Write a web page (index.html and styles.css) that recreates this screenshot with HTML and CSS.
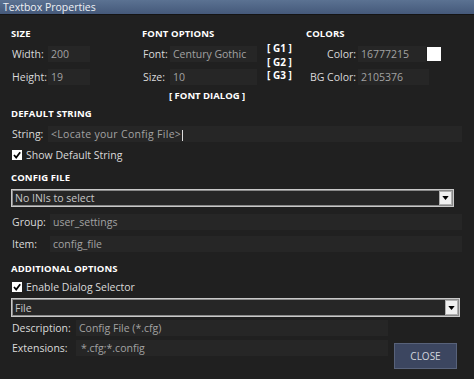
FILE: index.html
```html
<!DOCTYPE html>
<html>
<head>
<meta charset="utf-8">
<link rel="stylesheet" href="styles.css">
</head>
<body>
<div class="window">
  <div class="titlebar">Textbox Properties</div>
  <div class="content">
    <div class="top">
      <div class="col col-size">
        <div class="hdr">SIZE</div>
        <div class="row r1"><span class="lbl w36">Width:</span><span class="inp w42">200</span></div>
        <div class="row r2"><span class="lbl w36">Height:</span><span class="inp w42">19</span></div>
      </div>
      <div class="col col-font">
        <div class="hdr">FONT OPTIONS</div>
        <div class="font-body">
          <div class="font-fields">
            <div class="row r1"><span class="lbl w28">Font:</span><span class="inp w87">Century Gothic</span></div>
            <div class="row r2"><span class="lbl w28">Size:</span><span class="inp w87">10</span></div>
          </div>
          <div class="gstack">
            <span class="btnlink">[ G1 ]</span>
            <span class="btnlink">[ G2 ]</span>
            <span class="btnlink">[ G3 ]</span>
          </div>
        </div>
        <div class="btnlink dialog">[ FONT DIALOG ]</div>
      </div>
      <div class="col col-colors">
        <div class="hdr">COLORS</div>
        <div class="row r1"><span class="lbl w50 right">Color:</span><span class="inp w68">16777215</span><span class="swatch"></span></div>
        <div class="row r2"><span class="lbl w50 right">BG Color:</span><span class="inp w71">2105376</span></div>
      </div>
    </div>

    <div class="hdr sec-default">DEFAULT STRING</div>
    <div class="row r-string"><span class="lbl w36">String:</span><span class="inp wide">&lt;Locate your Config File&gt;<span class="caret"></span></span></div>
    <div class="check r-check1"><span class="box"><svg viewBox="0 0 10 10" width="10" height="10"><path d="M2 5 L4.2 7.5 L8.2 2.3" fill="none" stroke="#000" stroke-width="1.8"/></svg></span><span class="lbl">Show Default String</span></div>

    <div class="hdr sec-config">CONFIG FILE</div>
    <div class="select sel1"><span class="sel-text">No INIs to select</span><span class="arrow"><svg viewBox="0 0 8 5" width="7" height="4"><path d="M0 0 H8 L4 5 Z" fill="#000"/></svg></span></div>
    <div class="row r-group"><span class="lbl w38">Group:</span><span class="inp wide2">user_settings</span></div>
    <div class="row r-item"><span class="lbl w38">Item:</span><span class="inp wide2">config_file</span></div>

    <div class="hdr sec-add">ADDITIONAL OPTIONS</div>
    <div class="check r-check2"><span class="box"><svg viewBox="0 0 10 10" width="10" height="10"><path d="M2 5 L4.2 7.5 L8.2 2.3" fill="none" stroke="#000" stroke-width="1.8"/></svg></span><span class="lbl">Enable Dialog Selector</span></div>
    <div class="select sel2"><span class="sel-text">File</span><span class="arrow"><svg viewBox="0 0 8 5" width="7" height="4"><path d="M0 0 H8 L4 5 Z" fill="#000"/></svg></span></div>

    <div class="bottom">
      <div class="bfields">
        <div class="row r-desc"><span class="lbl w64">Description:</span><span class="inp w312">Config File (*.cfg)</span></div>
        <div class="row r-ext"><span class="lbl w64">Extensions:</span><span class="inp w312 pad4">*.cfg;*.config</span></div>
      </div>
      <div class="close">CLOSE</div>
    </div>
  </div>
</div>
</body>
</html>
```
FILE: styles.css
```css
* { box-sizing: border-box; }
html, body { margin: 0; padding: 0; }
body {
  width: 474px;
  height: 379px;
  overflow: hidden;
  background: #1f1f1f;
  font-family: "Open Sans", "DejaVu Sans", sans-serif;
  font-size: 10.5px;
  color: #d6d6d6;
}
.window { width: 474px; height: 379px; background: #202020; }
.titlebar {
  height: 15px;
  line-height: 14px;
  padding-left: 3px;
  font-size: 10.5px;
  color: #eef0f4;
  background: linear-gradient(#5b7292, #45597a);
  border-bottom: 1px solid #141414;
}
.content { padding-left: 11px; }
.top {
  display: grid;
  grid-template-columns: 131px 164px 1fr;
  padding-top: 12px;
}
.hdr {
  height: 14px;
  line-height: 14px;
  font-weight: 700;
  font-size: 9.5px;
  color: #ffffff;
  letter-spacing: 0.1px;
}
.row { display: flex; align-items: center; height: 16px; }
.r1 { margin-top: 5px; }
.r2 { margin-top: 7px; }
.lbl { padding-left: 1px; white-space: nowrap; color: #dadada; }
.right { text-align: right; padding-right: 2px; }
.w28 { width: 28px; }
.w36 { width: 37px; }
.w38 { width: 39px; }
.w50 { width: 52px; }
.w64 { width: 65px; }
.inp {
  height: 16px;
  line-height: 16px;
  background: #262626;
  color: #a2a2a2;
  padding-left: 3px;
  white-space: nowrap;
  overflow: hidden;
}
.r-string .inp { letter-spacing: 0.3px; }
.pad4 { padding-left: 5px; }
.w42 { width: 42px; }
.w87 { width: 87px; }
.w68 { width: 68px; }
.w71 { width: 71px; }
.wide { width: 414px; }
.wide2 { width: 412px; }
.w312 { width: 312px; }
.swatch {
  width: 14px;
  height: 14px;
  background: #ffffff;
  margin-left: 1px;
}
.font-body { display: flex; }
.gstack {
  display: flex;
  flex-direction: column;
  margin-left: 10px;
  margin-top: 1px;
}
.btnlink {
  font-weight: 700;
  font-size: 10px;
  color: #ffffff;
  line-height: 13.5px;
  white-space: nowrap;
}
.dialog { margin-left: 27px; margin-top: 4px; line-height: 14px; font-size: 9.5px; }
.sec-default { margin-top: 4px; }
.r-string { margin-top: 5px; }
.caret {
  display: inline-block;
  width: 1px;
  height: 11px;
  background: #dddddd;
  vertical-align: middle;
  margin-left: 1px;
}
.check { display: flex; align-items: center; height: 14px; }
.r-check1 { margin-top: 6px; }
.r-check2 { margin-top: 4px; }
.box {
  width: 10px;
  height: 10px;
  background: #ffffff;
  margin-left: 1px;
  margin-right: 3px;
  display: flex;
}
.sec-config { margin-top: 9px; }
.select {
  display: flex;
  align-items: center;
  border: 1px solid #c9c9c9;
  box-shadow: inset 0 0 0 1px #8a8a8a;
  background: #262626;
  color: #c8c8c8;
}
.sel1 { width: 443px; height: 18px; margin-top: 4px; }
.sel2 { width: 449px; height: 19px; margin-top: 4px; }
.sel-text { flex: 1; padding-left: 3px; line-height: 16px; }
.arrow {
  width: 13px;
  height: calc(100% - 2px);
  margin-right: 1px;
  background: #f0f0f0;
  border: 1px solid #b0b0b0;
  display: flex;
  align-items: center;
  justify-content: center;
}
.r-group { margin-top: 7px; }
.r-item { margin-top: 6px; }
.sec-add { margin-top: 10px; }
.bottom { display: flex; align-items: flex-start; margin-top: 3px; }
.r-ext { margin-top: 4px; }
.close {
  margin-left: 6px;
  margin-top: 23px;
  width: 63px;
  height: 26px;
  line-height: 24px;
  text-align: center;
  background: #3c4660;
  border: 1px solid #58627a;
  color: #d2d6de;
  font-size: 10px;
}
```
